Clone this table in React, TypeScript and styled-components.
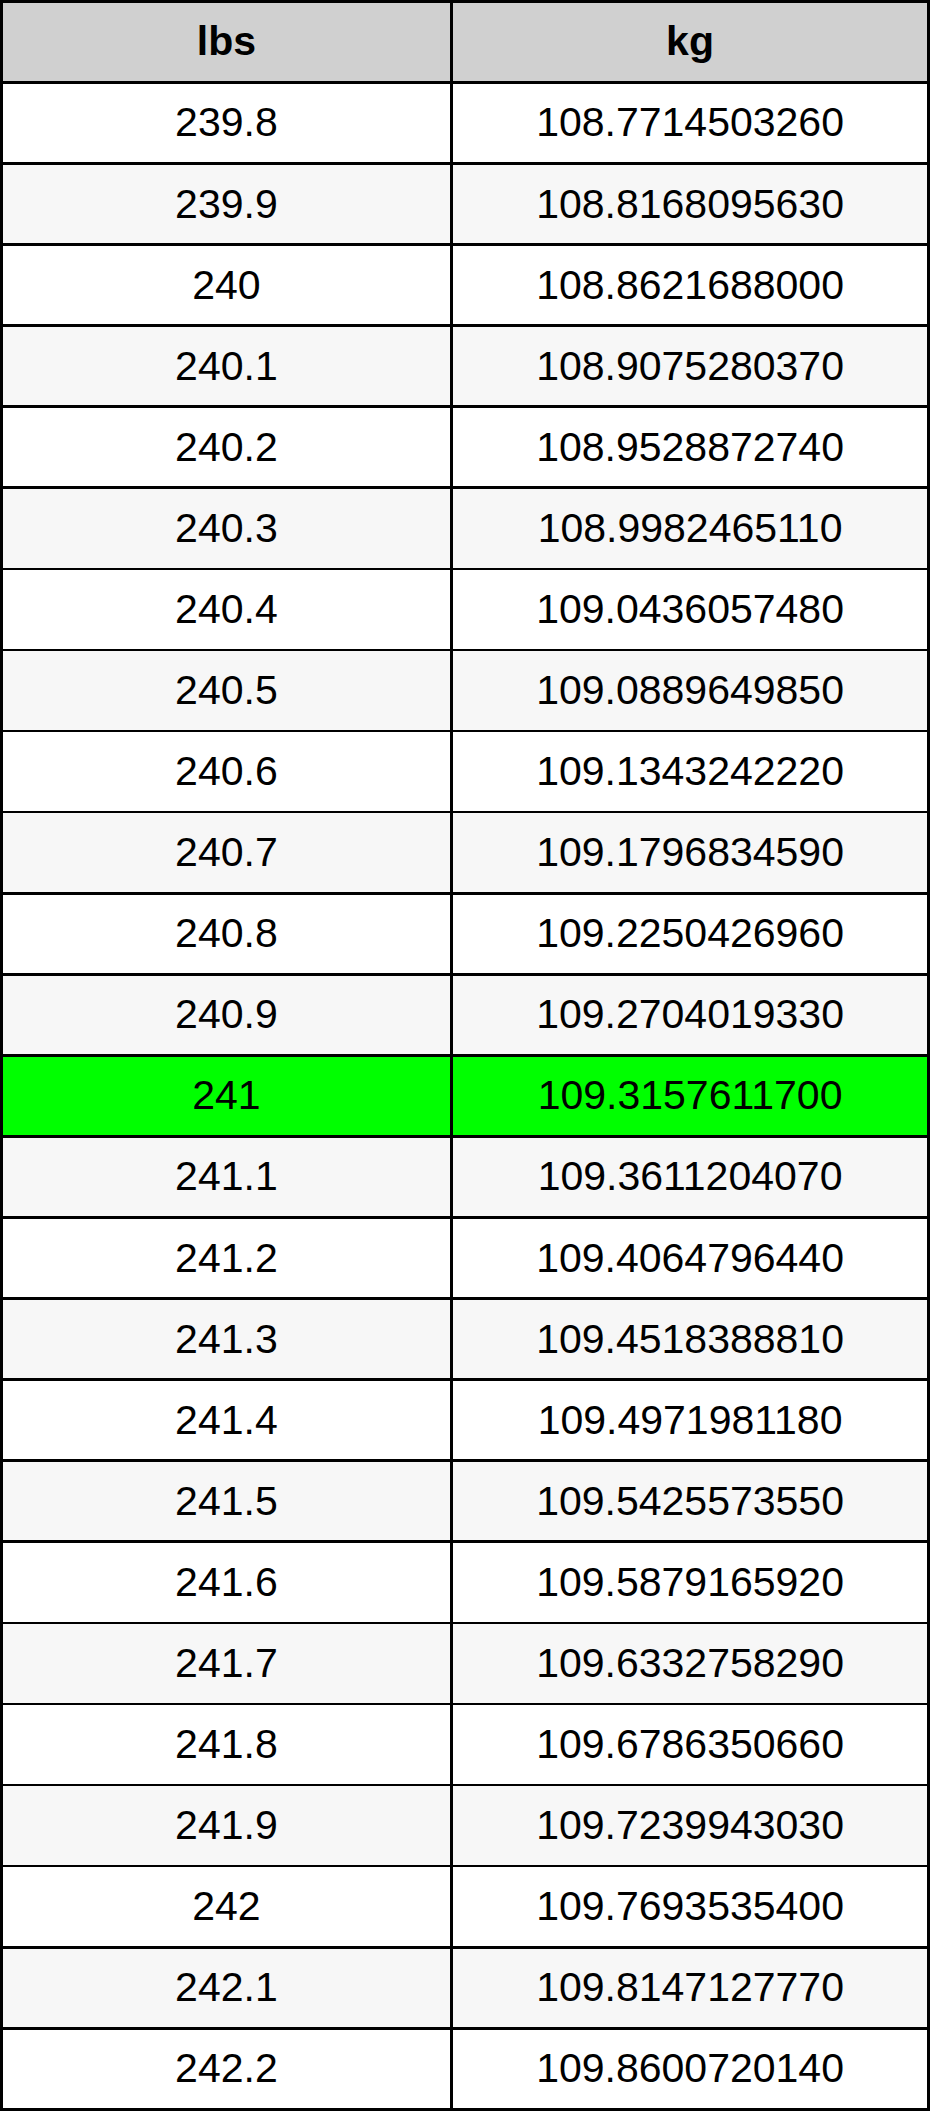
import styled, { createGlobalStyle } from "styled-components";

const rows: [string, string][] = [
  ["239.8", "108.7714503260"],
  ["239.9", "108.8168095630"],
  ["240", "108.8621688000"],
  ["240.1", "108.9075280370"],
  ["240.2", "108.9528872740"],
  ["240.3", "108.9982465110"],
  ["240.4", "109.0436057480"],
  ["240.5", "109.0889649850"],
  ["240.6", "109.1343242220"],
  ["240.7", "109.1796834590"],
  ["240.8", "109.2250426960"],
  ["240.9", "109.2704019330"],
  ["241", "109.3157611700"],
  ["241.1", "109.3611204070"],
  ["241.2", "109.4064796440"],
  ["241.3", "109.4518388810"],
  ["241.4", "109.4971981180"],
  ["241.5", "109.5425573550"],
  ["241.6", "109.5879165920"],
  ["241.7", "109.6332758290"],
  ["241.8", "109.6786350660"],
  ["241.9", "109.7239943030"],
  ["242", "109.7693535400"],
  ["242.1", "109.8147127770"],
  ["242.2", "109.8600720140"],
];

const GlobalStyle = createGlobalStyle`
  html, body {
    margin: 0;
    padding: 0;
    background: #ffffff;
  }
`;

export default function App() {
  return (
    <>
      <GlobalStyle />
      <Table>
        <HeadCell>lbs</HeadCell>
        <HeadCell>kg</HeadCell>
        {rows.map(([lbs, kg], i) => {
          const tone = lbs === "241" ? "hit" : i % 2 === 0 ? "odd" : "even";
          return [
            <Cell key={lbs + "a"} $tone={tone}>
              {lbs}
            </Cell>,
            <Cell key={lbs + "b"} $tone={tone}>
              {kg}
            </Cell>,
          ];
        })}
      </Table>
    </>
  );
}

type Tone = "odd" | "even" | "hit";

const toneColor: Record<Tone, string> = {
  odd: "#ffffff",
  even: "#f7f7f7",
  hit: "#00ff00",
};

const Table = styled.div`
  display: grid;
  grid-template-columns: 446fr 473fr;
  grid-auto-rows: 78.4px;
  gap: 2.7px;
  padding: 2.7px;
  width: 930px;
  box-sizing: border-box;
  background: #000000;
  font-family: "Liberation Sans", Arial, sans-serif;
  font-size: 41px;
  color: #000000;
`;

const HeadCell = styled.div`
  display: flex;
  align-items: center;
  justify-content: center;
  background: #d0d0d0;
  font-weight: bold;
`;

const Cell = styled.div<{ $tone: Tone }>`
  display: flex;
  align-items: center;
  justify-content: center;
  background: ${(p) => toneColor[p.$tone]};
`;
